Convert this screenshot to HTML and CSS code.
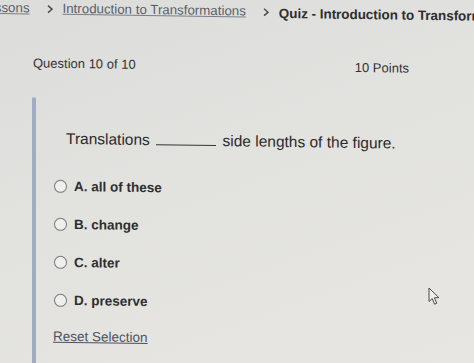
FILE: index.html
```html
<!DOCTYPE html>
<html lang="en">
<head>
<meta charset="utf-8">
<title>Quiz - Introduction to Transformations</title>
<link rel="stylesheet" href="styles.css">
</head>
<body>
<div class="page">
  <nav class="crumbs">
    <a class="crumb first" href="#">Lessons</a>
    <svg class="chev" width="6" height="9" viewBox="0 0 6 9"><path d="M1 1 L5 4.5 L1 8" fill="none" stroke="#4a4c52" stroke-width="1.5"/></svg>
    <a class="crumb" href="#">Introduction to Transformations</a>
    <svg class="chev" width="6" height="9" viewBox="0 0 6 9"><path d="M1 1 L5 4.5 L1 8" fill="none" stroke="#4a4c52" stroke-width="1.5"/></svg>
    <span class="current">Quiz - Introduction to Transformations</span>
  </nav>

  <div class="qhead">
    <span>Question 10 of 10</span>
    <span class="points">10 Points</span>
  </div>

  <section class="qbody">
    <p class="prompt">Translations <span class="blank"></span> side lengths of the figure.</p>
    <ul class="options">
      <li class="option"><span class="radio"></span><span>A. all of these</span></li>
      <li class="option"><span class="radio"></span><span>B. change</span></li>
      <li class="option"><span class="radio"></span><span>C. alter</span></li>
      <li class="option"><span class="radio"></span><span>D. preserve</span></li>
    </ul>
    <a class="reset" href="#">Reset Selection</a>
  </section>
</div>
<svg class="cursor" width="14" height="19" viewBox="0 0 14 19"><path d="M1 1 L1 14.5 L4.2 11.6 L6.6 17.2 L8.8 16.2 L6.4 10.8 L10.8 10.6 Z" fill="#efefec" stroke="#4a4a4a" stroke-width="1" stroke-linejoin="round"/></svg>
</body>
</html>
```

FILE: styles.css
```css
html, body {
  margin: 0;
  padding: 0;
}
body {
  width: 474px;
  height: 363px;
  overflow: hidden;
  position: relative;
  background: linear-gradient(160deg, #dcdcda 0%, #e2e2df 45%, #e7e6e2 100%);
  font-family: "Liberation Sans", Arial, sans-serif;
  color: #2b2b2b;
}
.page {
  transform: skewY(0.8deg);
  transform-origin: 0 0;
}
.crumbs {
  display: flex;
  align-items: center;
  height: 16px;
  line-height: 16px;
  font-size: 13.3px;
  white-space: nowrap;
}
.crumb {
  color: #5a5e6a;
  text-decoration: underline;
  text-decoration-color: #7a7e8a;
}
.crumb.first {
  margin-left: -20px;
}
.chev {
  flex: none;
  margin: 0 10px 0 17px;
}
.current {
  font-weight: bold;
  font-size: 13.4px;
  color: #2d2d2f;
  margin-top: 3px;
}
.qhead {
  display: flex;
  justify-content: space-between;
  margin-top: 38px;
  padding: 0 65px 0 33px;
  line-height: 17px;
  font-size: 13px;
  color: #333;
}
.qbody {
  margin: 26px 0 0 32px;
  border-left: 4px solid #9eacc5;
  padding: 31px 0 40px 0;
}
.prompt {
  margin: 0;
  padding-left: 30px;
  font-size: 15.5px;
  line-height: 20px;
  color: #2a2a2a;
}
.blank {
  display: inline-block;
  width: 60px;
  height: 14px;
  border-bottom: 1px solid #333;
  margin: 0 2px;
  vertical-align: baseline;
}
.options {
  list-style: none;
  margin: 18px 0 0 0;
  padding: 0 0 0 18px;
}
.option {
  display: flex;
  align-items: center;
  height: 38px;
  gap: 7px;
  font-size: 13.5px;
  font-weight: bold;
  color: #2e2e2e;
}
.radio {
  width: 11px;
  height: 11px;
  border: 1.3px solid #7a7a7a;
  border-radius: 50%;
  background: #efefed;
  flex: none;
}
.reset {
  display: block;
  margin: 8px 0 0 17px;
  line-height: 20px;
  font-size: 13.5px;
  color: #4d5261;
  text-decoration: underline;
}
.cursor {
  position: absolute;
  left: 428px;
  top: 287px;
}
```
